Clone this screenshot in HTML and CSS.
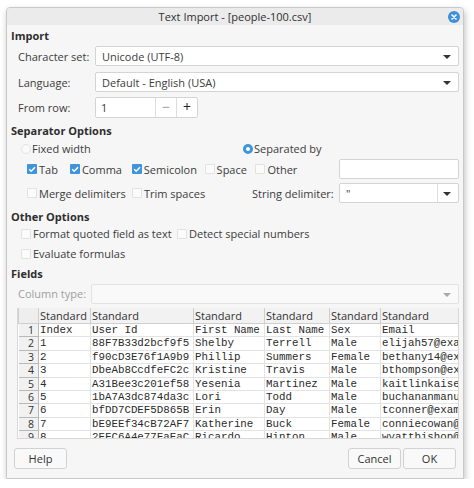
FILE: index.html
```html
<!DOCTYPE html>
<html lang="en">
<head>
    <meta charset="UTF-8">
    <title>Text Import - [people-100.csv]</title>
    <link rel="stylesheet" href="styles.css">
</head>
<body>
    <div class="window">
        <div class="titlebar">
            Text Import - [people-100.csv]
            <span class="close">
                <svg width="12" height="12" viewBox="0 0 12 12"><circle cx="6" cy="6" r="6" fill="#3d8fd8"/><path d="M4 4l4 4M8 4l-4 4" stroke="#fff" stroke-width="1.6" stroke-linecap="round"/></svg>
            </span>
        </div>
        <div class="content">
            <div class="section">Import</div>
            <div class="row r-charset">
                <label class="lbl">Character set:</label>
                <div class="combo grow">Unicode (UTF-8)<span class="arrow"></span></div>
            </div>
            <div class="row r-lang">
                <label class="lbl">Language:</label>
                <div class="combo grow">Default - English (USA)<span class="arrow"></span></div>
            </div>
            <div class="row r-from">
                <label class="lbl">From row:</label>
                <div class="spin">
                    <div class="spin-val">1</div>
                    <div class="spin-btn dim">&minus;</div>
                    <div class="spin-btn">+</div>
                </div>
            </div>

            <div class="section s-sep">Separator Options</div>
            <div class="row r-mode">
                <span class="opt w-fixed"><span class="radio"></span>Fixed width</span>
                <span class="opt"><span class="radio on"></span>Separated by</span>
            </div>
            <div class="row r-seps">
                <span class="opt w-tab"><span class="check on"></span>Tab</span>
                <span class="opt w-comma"><span class="check on"></span>Comma</span>
                <span class="opt w-semi"><span class="check on"></span>Semicolon</span>
                <span class="opt w-space"><span class="check"></span>Space</span>
                <span class="opt w-other"><span class="check"></span>Other</span>
                <div class="field right-box"></div>
            </div>
            <div class="row r-merge">
                <span class="opt w-merge"><span class="check"></span>Merge delimiters</span>
                <span class="opt w-trim"><span class="check"></span>Trim spaces</span>
                <label class="lbl-sd">String delimiter:</label>
                <div class="combo right-box split">"<span class="arrow"></span></div>
            </div>

            <div class="section s-other">Other Options</div>
            <div class="row r-fmt">
                <span class="opt w-fmt"><span class="check"></span>Format quoted field as text</span>
                <span class="opt"><span class="check"></span>Detect special numbers</span>
            </div>
            <div class="row r-eval">
                <span class="opt"><span class="check"></span>Evaluate formulas</span>
            </div>

            <div class="section s-fields">Fields</div>
            <div class="row r-type">
                <label class="lbl-type">Column type:</label>
                <div class="combo grow disabled"><span class="arrow"></span></div>
            </div>

            <div class="grid">
                <table>
                    <colgroup>
                        <col class="c0"><col class="c1"><col class="c2"><col class="c3"><col class="c4"><col class="c5"><col class="c6">
                    </colgroup>
                    <thead>
                        <tr><th class="corner"></th><th>Standard</th><th>Standard</th><th>Standard</th><th>Standard</th><th>Standard</th><th>Standard</th></tr>
                    </thead>
                    <tbody>
                        <tr><td class="num">1</td><td>Index</td><td>User Id</td><td>First Name</td><td>Last Name</td><td>Sex</td><td>Email</td></tr>
                        <tr><td class="num">2</td><td>1</td><td>88F7B33d2bcf9f5</td><td>Shelby</td><td>Terrell</td><td>Male</td><td>elijah57@exa</td></tr>
                        <tr><td class="num">3</td><td>2</td><td>f90cD3E76f1A9b9</td><td>Phillip</td><td>Summers</td><td>Female</td><td>bethany14@ex</td></tr>
                        <tr><td class="num">4</td><td>3</td><td>DbeAb8CcdfeFC2c</td><td>Kristine</td><td>Travis</td><td>Male</td><td>bthompson@ex</td></tr>
                        <tr><td class="num">5</td><td>4</td><td>A31Bee3c201ef58</td><td>Yesenia</td><td>Martinez</td><td>Male</td><td>kaitlinkaise</td></tr>
                        <tr><td class="num">6</td><td>5</td><td>1bA7A3dc874da3c</td><td>Lori</td><td>Todd</td><td>Male</td><td>buchananmanu</td></tr>
                        <tr><td class="num">7</td><td>6</td><td>bfDD7CDEF5D865B</td><td>Erin</td><td>Day</td><td>Male</td><td>tconner@exam</td></tr>
                        <tr><td class="num">8</td><td>7</td><td>bE9EEf34cB72AF7</td><td>Katherine</td><td>Buck</td><td>Female</td><td>conniecowan@</td></tr>
                        <tr><td class="num">9</td><td>8</td><td>2EFC6A4e77FaEaC</td><td>Ricardo</td><td>Hinton</td><td>Male</td><td>wyattbishop@</td></tr>
                    </tbody>
                </table>
            </div>

            <div class="buttons">
                <button>Help</button>
                <span class="spacer"></span>
                <button>Cancel</button>
                <button>OK</button>
            </div>
        </div>
    </div>
</body>
</html>
```

FILE: styles.css
```css
body {
    margin: 0;
    background: #ffffff;
    font-family: "Open Sans", "Noto Sans", sans-serif;
    font-size: 11px;
    color: #3c3c3c;
}
.window {
    margin: 7px 0 0 6px;
    width: 456px;
    height: 470px;
    background: #f6f6f6;
    border: 1px solid #c9c9c9;
    border-radius: 4px 4px 0 0;
    box-shadow: 1px 3px 6px rgba(0,0,0,0.25);
    display: flex;
    flex-direction: column;
}
.titlebar {
    position: relative;
    height: 17px;
    line-height: 17px;
    background: #ebebeb;
    text-align: center;
    color: #303030;
    border-radius: 4px 4px 0 0;
}
.close {
    position: absolute;
    right: 3px;
    top: 2px;
    height: 12px;
}
.content {
    padding: 0 4px 0 4px;
    display: flex;
    flex-direction: column;
}
.section {
    font-weight: bold;
    color: #2e2e2e;
    height: 19px;
    line-height: 19px;
    margin-top: 1px;
}
.row {
    display: flex;
    align-items: center;
}
.lbl {
    width: 77px;
    padding-left: 7px;
}
.grow {
    flex: 1;
}
.combo {
    position: relative;
    height: 20px;
    line-height: 19px;
    background: #ffffff;
    border: 1px solid #d4d4d4;
    border-radius: 2px;
    padding-left: 6px;
    box-sizing: border-box;
}
.arrow {
    position: absolute;
    right: 7px;
    top: 8px;
    border-left: 4px solid transparent;
    border-right: 4px solid transparent;
    border-top: 4px solid #333;
}
.combo.split::after {
    content: "";
    position: absolute;
    right: 20px;
    top: 0;
    bottom: 0;
    border-left: 1px solid #dedede;
}
.combo.disabled {
    background: #f9f9f9;
    border-color: #e2e2e2;
}
.combo.disabled .arrow {
    border-top-color: #a8a8a8;
}
.r-charset { height: 22px; }
.r-lang { height: 20px; margin-top: 5px; }
.r-from { height: 20px; margin-top: 5px; }
.spin {
    display: flex;
    height: 19px;
    border: 1px solid #d4d4d4;
    border-radius: 2px;
    background: #ffffff;
}
.spin-val {
    width: 54px;
    padding-left: 5px;
    line-height: 19px;
    border-right: 1px solid #dedede;
}
.spin-btn {
    width: 20px;
    text-align: center;
    line-height: 18px;
    font-size: 14px;
    color: #222;
}
.spin-btn.dim {
    color: #9a9a9a;
    border-right: 1px solid #dedede;
}
.s-sep { margin-top: 4px; }
.opt {
    display: flex;
    align-items: center;
    white-space: nowrap;
}
.radio {
    width: 10px;
    height: 10px;
    border-radius: 50%;
    border: 1px solid #e4e4e4;
    background: #fafafa;
    box-sizing: border-box;
    margin-right: 1px;
}
.radio.on {
    border: 3px solid #3f95dc;
    background: #ffffff;
}
.check {
    width: 10px;
    height: 10px;
    border: 1px solid #e2e2e2;
    background: #fbfbfb;
    border-radius: 1px;
    box-sizing: border-box;
    margin-right: 2px;
}
.check.on {
    border: none;
    background: #3f95dc url("data:image/svg+xml;utf8,<svg xmlns='http://www.w3.org/2000/svg' width='10' height='10'><path d='M2.2 5.2l2 2 3.8-4' fill='none' stroke='white' stroke-width='1.5'/></svg>");
}
.r-mode { height: 17px; margin-top: 0; padding-left: 10px; }
.w-fixed { width: 222px; }
.r-seps { height: 20px; margin-top: 2px; padding-left: 16px; }
.w-tab { width: 43px; }
.w-comma { width: 62px; }
.w-semi { width: 73px; }
.w-space { width: 51px; }
.w-other { width: 84px; }
.field {
    height: 20px;
    background: #ffffff;
    border: 1px solid #d4d4d4;
    border-radius: 2px;
    box-sizing: border-box;
}
.right-box {
    width: 120px;
}
.r-merge { height: 20px; margin-top: 4px; padding-left: 16px; }
.w-merge { width: 105px; }
.w-trim { width: 120px; }
.lbl-sd {
    width: 87px;
}
.s-other { margin-top: 4px; }
.r-fmt { height: 17px; margin-top: -1px; padding-left: 10px; }
.w-fmt { width: 156px; }
.r-eval { height: 17px; margin-top: 3px; padding-left: 10px; }
.s-fields { margin-top: 2px; }
.r-type { height: 21px; margin-top: 0; }
.lbl-type {
    width: 73px;
    padding-left: 7px;
    color: #a0a0a0;
}
.grid {
    margin: 4px 0 0 6px;
    width: 442px;
    height: 131px;
    overflow: hidden;
    background: #ffffff;
    border: 1px solid #d8d8d8;
    border-top: none;
    box-sizing: border-box;
}
table {
    border-collapse: collapse;
    table-layout: fixed;
    width: 441px;
}
.c0 { width: 20px; }
.c1 { width: 52px; }
.c2 { width: 103px; }
.c3 { width: 71px; }
.c4 { width: 65px; }
.c5 { width: 51px; }
.c6 { width: 79px; }
th {
    height: 15px;
    padding: 0 0 0 1px;
    background: #f2f2f2;
    border: 1px solid #cfcfcf;
    border-top: none;
    font-weight: normal;
    text-align: left;
    color: #333;
    white-space: nowrap;
    overflow: hidden;
}
th.corner {
    background: #eeeeee;
}
td {
    height: 12.4px;
    padding: 0 0 0 1px;
    font-family: "Liberation Mono", monospace;
    font-size: 10.8px;
    line-height: 12.4px;
    color: #2a2a2a;
    border-right: 1px solid #e3e3e3;
    border-bottom: 1px solid #e3e3e3;
    white-space: nowrap;
    overflow: hidden;
}
td.num {
    font-family: "Open Sans", "Noto Sans", sans-serif;
    font-size: 10.5px;
    text-align: right;
    padding: 0 4px 0 0;
    background: #f1f1f1;
    border-right: 1px solid #b8b8b8;
    border-bottom: 1px solid #b8b8b8;
    color: #333;
}
.buttons {
    display: flex;
    gap: 2px;
    margin: 9px 0 0 3px;
    padding-right: 3px;
}
.spacer {
    flex: 1;
}
button {
    width: 53px;
    height: 21px;
    padding: 0;
    background: #f9f9f9;
    border: 1px solid #d2d2d2;
    border-radius: 3px;
    font-family: "Open Sans", "Noto Sans", sans-serif;
    font-size: 11px;
    color: #333;
}
```
